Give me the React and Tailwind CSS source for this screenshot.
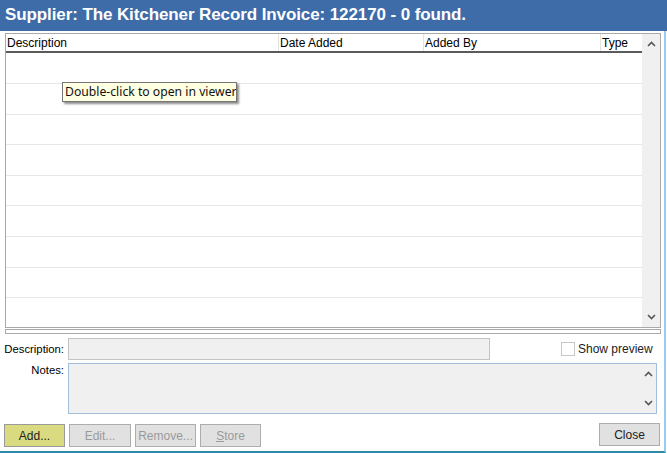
import React from "react";

const Up = () => (
  <svg width="9" height="6" viewBox="0 0 9 6"><polyline points="1,5 4.5,1.5 8,5" fill="none" stroke="#555" strokeWidth="1.6" /></svg>
);
const Down = () => (
  <svg width="9" height="6" viewBox="0 0 9 6"><polyline points="1,1 4.5,4.5 8,1" fill="none" stroke="#555" strokeWidth="1.6" /></svg>
);

const rowH = ["h-[31px]", "h-[31px]", "h-[30px]", "h-[31px]", "h-[30px]", "h-[31px]", "h-[31px]", "h-[30px]"];

export default function App() {
  return (
    <div className="relative w-[667px] h-[453px] bg-white overflow-hidden flex flex-col font-['Liberation_Sans',Arial,sans-serif] text-[12px] text-black">
      <div className="h-[31px] shrink-0 bg-[#3d6ca8] flex items-center pl-[5px] pb-[1px]">
        <span className="text-white font-bold text-[17px] tracking-[-0.1px]">Supplier: The Kitchener Record Invoice: 122170 - 0 found.</span>
      </div>
      <div className="flex-1 flex flex-col border-r-[2px] border-r-[#9ccbef] border-b-[2px] border-b-[#2e8aa8] mr-[1px]">
        <div className="ml-[5px] mt-[2px] w-[656px] h-[295px] border border-[#a9a9a9] flex">
          <div className="flex-1 flex flex-col">
            <div className="h-[19px] flex border-b-[2px] border-[#5a5a5a] shrink-0">
              <div className="w-[273px] pl-[1px] border-r border-[#e3e3e3] leading-[18px]">Description</div>
              <div className="w-[145px] pl-[1px] border-r border-[#e3e3e3] leading-[18px]">Date Added</div>
              <div className="w-[177px] pl-[1px] border-r border-[#e3e3e3] leading-[18px]">Added By</div>
              <div className="flex-1 pl-[1px] leading-[18px]">Type</div>
            </div>
            {rowH.map((h, i) => (
              <div key={i} className={`${h} shrink-0 border-b border-[#e6e6e6]`} />
            ))}
          </div>
          <div className="w-[18px] bg-[#f0f0f0] flex flex-col items-center justify-between py-[7px]">
            <Up />
            <Down />
          </div>
        </div>
        <div className="ml-[5px] mt-[1px] w-[656px] h-[5px] border border-[#a9a9a9]" />
        <div className="mt-[4px] flex items-center h-[22px]">
          <div className="w-[65px] text-right pr-[1px] text-[11.3px]">Description:</div>
          <div className="ml-[3px] w-[422px] h-[22px] bg-[#f0f0f0] border border-[#c4c4c4]" />
          <div className="ml-[71px] flex items-center">
            <div className="w-[14px] h-[14px] bg-white border border-[#c6c6c6]" />
            <span className="ml-[3px] text-[#222]">Show preview</span>
          </div>
        </div>
        <div className="mt-[3px] flex h-[51px]">
          <div className="w-[65px] text-right pr-[1px] text-[11.3px] leading-[14px] pt-[0px]">Notes:</div>
          <div className="ml-[3px] w-[589px] h-[51px] bg-[#f0f0f0] border border-[#a3bfd9] flex justify-end">
            <div className="w-[16px] flex flex-col items-center justify-between py-[7px]">
              <Up />
              <Down />
            </div>
          </div>
        </div>
        <div className="mt-[10px] flex items-start">
          <div className="ml-[4px] w-[61px] h-[23px] bg-[#dada80] border border-[#9a9a9a] flex items-center justify-center text-[#222]">Add...</div>
          <div className="ml-[4px] w-[62px] h-[23px] bg-[#e1e1e1] border border-[#adadad] flex items-center justify-center text-[#9a9a9a]">Edit...</div>
          <div className="ml-[4px] w-[61px] h-[23px] bg-[#e1e1e1] border border-[#adadad] flex items-center justify-center text-[#9a9a9a]">Remove...</div>
          <div className="ml-[4px] w-[61px] h-[23px] bg-[#e1e1e1] border border-[#adadad] flex items-center justify-center text-[#9a9a9a]"><span><span className="underline">S</span>tore</span></div>
          <div className="ml-auto mr-[4px] -mt-[1px] w-[61px] h-[23px] bg-[#e1e1e1] border border-[#adadad] flex items-center justify-center text-[#222]">Close</div>
        </div>
      </div>
      <div className="absolute left-[62px] top-[82px] w-[175px] h-[20px] bg-[#ffffe1] border border-[#767676] shadow-[2px_2px_2px_rgba(0,0,0,0.45)] flex items-center pl-[2px] font-['Noto_Sans',sans-serif] text-[12.2px] text-[#111] whitespace-nowrap overflow-hidden">
        Double-click to open in viewer
      </div>
    </div>
  );
}
